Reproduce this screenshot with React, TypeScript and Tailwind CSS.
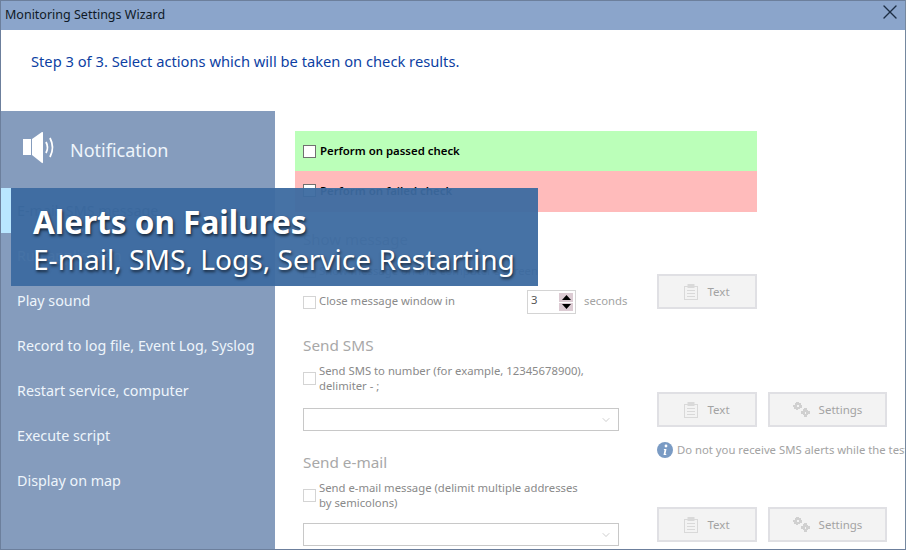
import { ChevronDown, X } from 'lucide-react'

const menu = ['E-mail, SMS message', 'Run application', 'Play sound', 'Record to log file, Event Log, Syslog', 'Restart service, computer', 'Execute script', 'Display on map']

function SpeakerIcon() {
  return (
    <svg width="34" height="34" viewBox="0 0 34 34" fill="none">
      <rect x="0" y="8" width="8" height="16" fill="#fff" />
      <path d="M9 8 L19 1 Q20 0.5 20 2 V31 Q20 32.5 19 32 L9 24 Z" fill="#fff" />
      <path d="M23 11 Q26 16.500 23 22" stroke="#fff" strokeWidth="1.800" />
      <path d="M27 7 Q32 16.500 27 26" stroke="#fff" strokeWidth="1.800" />
    </svg>
  )
}

function ClipboardIcon() {
  return (
    <svg width="14" height="16" viewBox="0 0 14 16" fill="none" stroke="#d9d9d9">
      <rect x="0.500" y="2.500" width="13" height="13" />
      <rect x="4" y="0.500" width="6" height="3" fill="#d9d9d9" />
      <path d="M3 6.500H11M3 9.500H11M3 12.500H11" />
    </svg>
  )
}

function GearsIcon() {
  return (
    <svg width="17" height="15" viewBox="0 0 17 15" fill="#d0d0d0">
      <path d="M2 1H3V0H6V1H8V3H9V6H7V7H5V8H3V7H1V5H0V3H2Z" />
      <path d="M10 7H11V6H14V8H15V9H17V12H15V13H14V15H11V13H10V12H8V9H10Z" />
      <rect x="4" y="3" width="2" height="2" fill="#f3f3f3" />
      <rect x="12" y="10" width="1" height="2" fill="#f3f3f3" />
    </svg>
  )
}

function InfoIcon() {
  return (
    <svg width="16" height="16" viewBox="0 0 16 16" className="shrink-0">
      <circle cx="8" cy="8" r="8" fill="#7a9bc4" />
      <circle cx="9" cy="4" r="1.400" fill="#fff" />
      <path d="M7 7H9.500L8.500 12H9.500L9 13H6.500L7.500 8H6.800Z" fill="#fff" />
    </svg>
  )
}

function SpinArrow({ down }: { down?: boolean }) {
  return (
    <span className="flex h-[9px] items-center justify-center bg-[#dccbd3]">
      <svg width="9" height="5" viewBox="0 0 9 5" fill="#000">
        <path d={down ? 'M0 0H9L4.500 5Z' : 'M0 5H9L4.500 0Z'} />
      </svg>
    </span>
  )
}

function Checkbox({ active }: { active?: boolean }) {
  return <span className={`block h-[13px] w-[13px] shrink-0 border bg-white ${active ? 'border-[#707070]' : 'border-[#d4d4d4]'}`} />
}

function ActionButton({ label, gears }: { label: string; gears?: boolean }) {
  return (
    <div className={`flex h-[35px] items-center justify-center gap-[9px] border-2 border-[#e0e0e4] bg-[#f3f3f3] text-[11.500px] text-[#a3a3a3] ${gears ? 'w-[119px]' : 'w-[100px]'}`}>
      {gears ? <GearsIcon /> : <ClipboardIcon />}
      <span>{label}</span>
    </div>
  )
}

function Combo() {
  return (
    <div className="flex h-[23px] w-[316px] items-center justify-end border border-[#c8c8c8] bg-white pr-[6px]">
      <ChevronDown size={12} strokeWidth={1} className="text-[#9a9a9a]" />
    </div>
  )
}

export default function App() {
  return (
    <div className="relative flex h-[550px] w-[906px] flex-col overflow-hidden border border-[#6c7f9c] border-r-[#75889f] bg-white font-['Noto_Sans',sans-serif]">
      {/* Title */}
      <div className="flex h-[29px] shrink-0 items-center justify-between bg-[#8ba5cb] pl-[4px] pr-[3px] text-[12.500px] text-[#0f1a26]">
        <span>Monitoring Settings Wizard</span>
        <X size={24} strokeWidth={1.400} className="-mt-[8px] text-[#1d2e44]" />
      </div>

      <div className="flex h-[81px] shrink-0 items-start pl-[30px] pt-[21px] text-[14.700px] leading-[20px] text-[#0d3fa3]">
        Step 3 of 3. Select actions which will be taken on check results.
      </div>

      <div className="flex min-h-0 flex-1">
        {/* Sidebar */}
        <aside className="w-[274px] shrink-0 bg-[#859cbd] text-[14.300px] text-[#eef5fb]">
          <div className="flex h-[77px] items-start pl-[22px] pt-[20px]">
            <SpeakerIcon />
            <span className="ml-[13px] mt-[6px] text-[18px] leading-[26px]">Notification</span>
          </div>
          {menu.map((item, i) => (
            <div key={item} className={`flex h-[45px] items-center ${i === 0 ? 'border-l-[10px] border-[#b9e6ff] pl-[6px] text-[#24406a]' : 'pl-[16px]'}`}>
              {item}
            </div>
          ))}
        </aside>

        {/* Main */}
        <main className="min-w-0 flex-1 pl-[20px] pt-[20px]">
          <div className="w-[462px] text-[11.400px] font-semibold text-black">
            <div className="flex h-[40px] items-center gap-[4px] bg-[#bbffb9] pl-[8px]">
              <Checkbox active />
              Perform on passed check
            </div>
            <div className="flex h-[41px] items-center gap-[4px] bg-[#ffbbbb] pb-[2px] pl-[8px]">
              <Checkbox active />
              Perform on failed check
            </div>
          </div>

          <div className="flex text-[11.300px] text-[#8a8a8a]">
            <div className="w-[362px] shrink-0 pl-[8px]">
              <h2 className="mt-[15px] text-[15px] leading-[24px] text-[#a8a8a8]">Show message</h2>
              <div className="mt-[11px] flex h-[18px] items-center gap-[3px]">
                <Checkbox />
                Show message on this computer's screen
              </div>
              <div className="mt-[10px] flex h-[24px] items-center">
                <Checkbox />
                <span className="ml-[3px] w-[208px] -translate-y-px">Close message window in</span>
                <div className="flex h-[24px] w-[49px] justify-between border border-[#d4d4d4] pl-[3px] pr-[2px] text-[#555]">
                  <span className="leading-[18px]">3</span>
                  <div className="my-[2px] flex w-[14px] flex-col gap-px">
                    <SpinArrow />
                    <SpinArrow down />
                  </div>
                </div>
                <span className="ml-[8px] -translate-y-px text-[#a3a3a3]">seconds</span>
              </div>

              <h2 className="mt-[19px] text-[15.300px] leading-[24px] text-[#a8a8a8]">Send SMS</h2>
              <div className="mt-[6px] flex w-[290px] items-center gap-[3px] leading-[15px]">
                <Checkbox />
                <span>Send SMS to number (for example, 12345678900), delimiter - ;</span>
              </div>
              <div className="mt-[15px]"><Combo /></div>

              <h2 className="mt-[19px] text-[15.300px] leading-[24px] text-[#a8a8a8]">Send e-mail</h2>
              <div className="mt-[6px] flex w-[290px] items-center gap-[3px] leading-[15px]">
                <Checkbox />
                <span>Send e-mail message (delimit multiple addresses by semicolons)</span>
              </div>
              <div className="mt-[13px]"><Combo /></div>
            </div>

            <div className="min-w-0 flex-1 overflow-hidden">
              <div className="mt-[62px]"><ActionButton label="Text" /></div>
              <div className="mt-[83px] flex gap-[11px]">
                <ActionButton label="Text" />
                <ActionButton label="Settings" gears />
              </div>
              <div className="mt-[15px] flex h-[16px] items-center gap-[4px] whitespace-nowrap text-[#a3a3a3]">
                <InfoIcon />
                Do not you receive SMS alerts while the test is running?
              </div>
              <div className="mt-[49px] flex gap-[11px]">
                <ActionButton label="Text" />
                <ActionButton label="Settings" gears />
              </div>
            </div>
          </div>
        </main>
      </div>

      {/* Banner over the wizard */}
      <div className="absolute left-[10px] top-[187px] h-[98px] w-[527px] bg-[#3c6aa0]/95 pl-[22px] pt-[14px] text-white [text-shadow:1px_2px_3px_rgba(0,0,0,0.65)]">
        <div className="text-[31.500px] font-bold leading-[40px]">Alerts on Failures</div>
        <div className="-mt-[2px] text-[28.100px] leading-[38px]">E-mail, SMS, Logs, Service Restarting</div>
      </div>
    </div>
  )
}
